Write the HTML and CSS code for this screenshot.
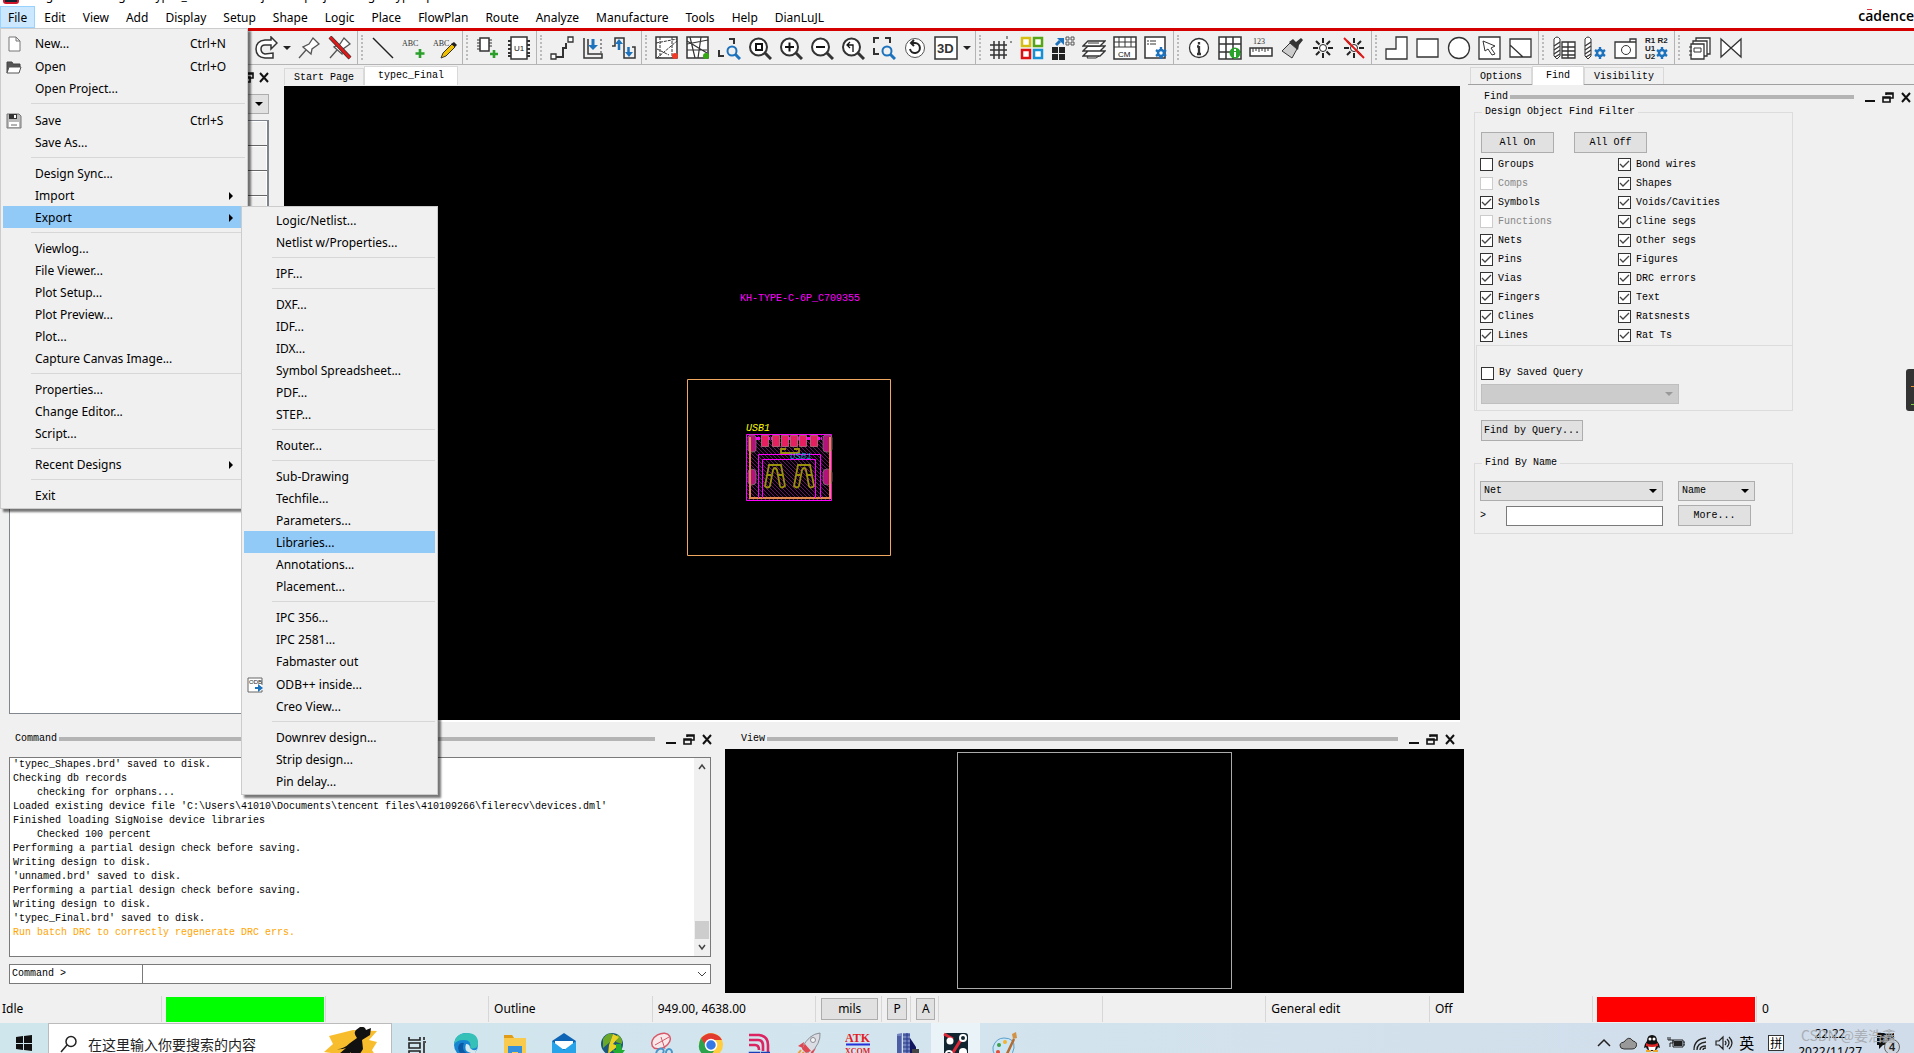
FILE: index.html
```html
<!DOCTYPE html>
<html lang="en">
<head>
<meta charset="utf-8">
<title>Allegro PCB Designer - typec_Final.brd</title>
<link rel="stylesheet" href="styles.css">
</head>
<body>
<svg class="defs" aria-hidden="true">
  <defs>
    <symbol id="min" viewBox="0 0 12 12"><path d="M1 10h10" stroke="#111" stroke-width="2"/></symbol>
    <symbol id="restore" viewBox="0 0 12 12"><path d="M4 4V2h7v5H8M4 3h7M1 6h7v5H1zM1 7h7" fill="none" stroke="#111" stroke-width="1.6"/></symbol>
    <symbol id="close" viewBox="0 0 12 12"><path d="M2 2l8 9M10 2l-8 9" stroke="#111" stroke-width="2"/></symbol>
    <symbol id="pin" viewBox="0 0 24 24"><path d="M2 22l7-8M6 11l8 7 1-5 7-5-6-6-4 6z" fill="#fff" stroke="#555" stroke-width="1.3"/></symbol>
    <symbol id="lens" viewBox="0 0 24 24"><circle cx="10.500" cy="11" r="8.500" fill="#fff" stroke="#333" stroke-width="2"/><path d="M17 17l6 6" stroke="#333" stroke-width="3"/></symbol>
    <symbol id="gear" viewBox="0 0 12 12"><circle cx="6" cy="6" r="3" fill="none" stroke="#1c72bd" stroke-width="2.500"/><path d="M6 0v3M6 9v3M1 3l2 1.500M9 7.500L11 9M1 9l2-1.500M9 4.500L11 3" stroke="#1c72bd" stroke-width="2.400"/></symbol>
    <symbol id="sun" viewBox="0 0 24 24"><circle cx="12" cy="12" r="3.500" fill="#fff" stroke="#222"/><path d="M12 2v5M12 17v5M2 12h5M17 12h5M5 5l3.500 3.500M15.500 15.500L19 19M19 5l-3.500 3.500M8.500 15.500L5 19" stroke="#222" stroke-width="2"/></symbol>
    <symbol id="drill" viewBox="0 0 8 24"><path d="M1 3q3-4 6 0v17l-3 3-3-3z" fill="#fff" stroke="#333"/><path d="M1 10l6-4M1 14l6-4M1 18l6-4M2 21l5-3" stroke="#333" stroke-width="1.300"/></symbol>
  </defs>
</svg>

<div class="app">
  <header class="titlebar">
    <svg width="16" height="16" viewBox="0 0 16 16"><rect width="16" height="16" rx="3" fill="#d0142c"/><rect x="2" width="12" height="14" fill="#0e2430"/></svg>
    <span>Allegro PCB Designer: typec_Final.brd  Project: D:/project/allegro/typec/pcb</span>
  </header>

  <nav class="menubar">
    <button class="open">File</button><button>Edit</button><button>View</button><button>Add</button><button>Display</button><button>Setup</button><button>Shape</button><button>Logic</button><button>Place</button><button>FlowPlan</button><button>Route</button><button>Analyze</button><button>Manufacture</button><button>Tools</button><button>Help</button><button>DianLuJL</button>
    <span class="brand">c<span class="macron">a</span>dence</span>
  </nav>

  <div class="toolbar">
    <div class="tools first">
      <button aria-label="Redo"><svg viewBox="0 0 24 24"><path d="M19 17v5h-8Q2 21 2 13T11 4h6V1l6 6-6 6v-4h-6q-4 0-4 4t4 5z" fill="#fff" stroke="#333" stroke-width="1.500"/></svg></button>
      <button class="caret" aria-label="Redo list"><svg viewBox="0 0 8 8"><path d="M0 2h8L4 6z" fill="#222"/></svg></button>
      <button aria-label="Fix"><svg><use href="#pin"/></svg></button>
      <button aria-label="Unfix"><svg viewBox="0 0 24 24"><use href="#pin" width="24" height="24"/><path d="M2 1l20 21" stroke="#333" stroke-width="4"/><path d="M2 1l20 21" stroke="#e01818" stroke-width="2.600"/></svg></button>
    </div>
    <div class="tools">
      <button aria-label="Add line"><svg viewBox="0 0 24 24"><path d="M2 2l20 20" stroke="#222" stroke-width="1.500"/></svg></button>
      <button aria-label="Add text"><svg viewBox="0 0 24 24"><text x="0" y="10" class="ts">ABC</text><path d="M18 13v9M13.500 17.500h9" stroke="#2aa02a" stroke-width="2.600"/></svg></button>
      <button aria-label="Edit text"><svg viewBox="0 0 24 24"><text x="0" y="10" class="ts">ABC</text><path d="M8 22l2-5 9-9 3 3-9 9z" fill="#f0c000" stroke="#333"/><path d="M18 8l4 3 2-2-3-3z" fill="#222"/></svg></button>
    </div>
    <div class="tools">
      <button aria-label="Place manual"><svg viewBox="0 0 24 24"><rect x="4" y="2" width="9" height="13" fill="#fff" stroke="#333" stroke-width="1.500"/><path d="M1 4h3M1 7h3M1 10h3M1 13h3M13 4h3M13 7h3M13 10h3" stroke="#333"/><path d="M18 14v8M14 18h8" stroke="#2aa02a" stroke-width="2.600"/></svg></button>
      <button aria-label="Component"><svg viewBox="0 0 24 24"><rect x="4" y="1" width="16" height="22" fill="#fff" stroke="#333" stroke-width="1.500"/><path d="M1 5h3M1 9h3M1 13h3M1 17h3M1 20h3M20 5h3M20 9h3M20 13h3M20 17h3M20 20h3" stroke="#333" stroke-width="2"/><text x="7" y="15" class="tm">U1</text></svg></button>
    </div>
    <div class="tools">
      <button aria-label="Add connect"><svg viewBox="0 0 24 24"><path d="M1 18h5v5H1zM18 1h5v5h-5z" fill="#fff" stroke="#333" stroke-width="1.300"/><path d="M6 21h7v-9h3V7" fill="none" stroke="#333" stroke-width="2"/></svg></button>
      <button aria-label="Slide"><svg viewBox="0 0 24 24"><path d="M3 2v20h18v-4H7V3" fill="none" stroke="#333" stroke-width="1.500"/><path d="M20 3v14" stroke="#333" stroke-dasharray="2 2"/><path d="M12 3v8" stroke="#1c72bd" stroke-width="3"/><path d="M7 9h10l-5 5z" fill="#1c72bd"/></svg></button>
      <button aria-label="Delay tune"><svg viewBox="0 0 24 24"><path d="M0 10h3V2h9v20h11V11h-3" fill="none" stroke="#333" stroke-width="1.500"/><path d="M7 14V7M16.500 11v7" stroke="#1c72bd" stroke-width="2.500"/><path d="M3 8h8L7 3zM13 16h8l-4 5z" fill="#1c72bd"/></svg></button>
    </div>
    <div class="tools">
      <button aria-label="Unrats all"><svg viewBox="0 0 24 24"><path d="M1 1h21v21H1z" fill="#fff" stroke="#333" stroke-width="1.500"/><path d="M5 1v21M17 1v21M1 7l21-4M2 22l20-17M2 13l12 6" fill="none" stroke="#333" stroke-dasharray="3 1"/><circle cx="20" cy="20" r="3" fill="#f03b28"/></svg></button>
      <button aria-label="Rats all"><svg viewBox="0 0 24 24"><path d="M1 1h21v21H1z" fill="#fff" stroke="#333" stroke-width="1.500"/><path d="M4 1l5 21M15 1l-3 21M1 8l21-4M1 14h20M1 5l20 12" fill="none" stroke="#333" stroke-width="1.200"/><circle cx="20" cy="20" r="3" fill="#35a910"/></svg></button>
      <button aria-label="Zoom points"><svg viewBox="0 0 24 24"><path d="M12 3h5v5M2 14v6h5" fill="none" stroke="#333" stroke-width="2"/><circle cx="15" cy="15" r="4.500" fill="none" stroke="#1c72bd" stroke-width="2"/><path d="M18 18l5 5" stroke="#1c72bd" stroke-width="3"/></svg></button>
      <button aria-label="Zoom fit"><svg viewBox="0 0 24 24"><use href="#lens" width="24" height="24"/><path d="M8 8h6v6H8z" fill="none" stroke="#111" stroke-width="2"/></svg></button>
      <button aria-label="Zoom in"><svg viewBox="0 0 24 24"><use href="#lens" width="24" height="24"/><path d="M6 11h9M10.500 6.500v9" stroke="#111" stroke-width="2"/></svg></button>
      <button aria-label="Zoom out"><svg viewBox="0 0 24 24"><use href="#lens" width="24" height="24"/><path d="M6 11h9" stroke="#111" stroke-width="2"/></svg></button>
      <button aria-label="Zoom previous"><svg viewBox="0 0 24 24"><use href="#lens" width="24" height="24"/><path d="M12 16V9H7M9 6L6 9l3 3" fill="none" stroke="#111" stroke-width="1.300"/></svg></button>
      <button aria-label="Zoom selection"><svg viewBox="0 0 24 24"><path d="M2 7V2h5M13 2h5v5M2 12v6h5" fill="none" stroke="#333" stroke-width="2"/><circle cx="15" cy="15" r="4.500" fill="none" stroke="#1c72bd" stroke-width="2"/><path d="M18 18l5 5" stroke="#1c72bd" stroke-width="3"/></svg></button>
      <button aria-label="Redraw"><svg viewBox="0 0 24 24"><circle cx="12" cy="12" r="9.500" fill="#fff" stroke="#555"/><path d="M7 13a5 5 0 1 0 5-6H9M11 4L8 7l3 3" fill="none" stroke="#222" stroke-width="2"/></svg></button>
      <button aria-label="3D view"><svg viewBox="0 0 24 24"><path d="M1 1h22v22H1z" fill="#fff" stroke="#333" stroke-width="1.500"/><text x="3" y="17" class="tl">3D</text></svg></button>
      <button class="caret" aria-label="3D list"><svg viewBox="0 0 8 8"><path d="M0 2h8L4 6z" fill="#222"/></svg></button>
    </div>
    <div class="tools">
      <button aria-label="Grid"><svg viewBox="0 0 24 24"><path d="M5 5v18M10 5v18M15 5v18M1 9h17M1 14h17M1 19h17" stroke="#333" stroke-width="1.500"/><path d="M18 0v3M21 6h2" stroke="#333"/></svg></button>
      <button aria-label="Color"><svg viewBox="0 0 24 24" fill="#fff" stroke-width="2.500"><path d="M2 2h8v8H2z" stroke="#d6bf14"/><path d="M14 2h8v8h-8z" stroke="#57a414"/><path d="M2 14h8v8H2z" stroke="#dd1111"/><path d="M14 14h8v8h-8z" stroke="#168fd4"/></svg></button>
      <button aria-label="Visibility"><svg viewBox="0 0 24 24"><path d="M1 11h6v6H1zM8 11h6v6H8zM1 18h6v6H1zM8 18h6v6H8z" fill="#222"/><path d="M5 9l4-4" stroke="#1c72bd" stroke-width="3"/><path d="M6 2h7v7z" fill="#1c72bd"/><path d="M15 1h3v3h-3zM20 1h3v3h-3zM15 6h3v3h-3zM20 6h3v3h-3z" fill="none" stroke="#555"/></svg></button>
      <button aria-label="Cross-section"><svg viewBox="0 0 24 24"><path d="M6 15h17l-5 5H1zM6 10h17l-5 5H1z" fill="#fff" stroke="#333" stroke-width="1.300"/><path d="M6 5h17l-5 5H1z" fill="#fff" stroke="#333" stroke-width="1.300"/><path d="M6 20l-1 2h9l3-2M6 7h11" fill="none" stroke="#333"/></svg></button>
      <button aria-label="Constraint manager"><svg viewBox="0 0 24 24"><path d="M1 1h22v22H1z" fill="#fff" stroke="#333" stroke-width="1.500"/><path d="M1 6h22M1 11h22M6 1v10M12 1v10M18 1v10" stroke="#333"/><text x="5" y="21" class="tm">CM</text></svg></button>
      <button aria-label="Design parameters"><svg viewBox="0 0 24 24"><path d="M1 1h20v21H1z" fill="#fff" stroke="#333" stroke-width="1.500"/><path d="M3 5h2M3 8h2M6 5h6M6 8h6" stroke="#333"/><use href="#gear" x="11" y="11" width="12" height="12"/></svg></button>
    </div>
    <div class="tools">
      <button aria-label="Show element"><svg viewBox="0 0 24 24"><circle cx="12" cy="12" r="9.500" fill="#fff" stroke="#333" stroke-width="1.300"/><path d="M12 6v2.500M12 10v8M10 18h4M10 10.500h2" stroke="#333" stroke-width="2.300"/></svg></button>
      <button aria-label="Grid info"><svg viewBox="0 0 24 24"><path d="M1 1h22v22H1zM8 1v22M15 1v22M1 8h22M1 16h22" fill="#fff" stroke="#333" stroke-width="1.500"/><circle cx="17" cy="17" r="5.500" fill="#29a329"/><path d="M17 13v2M17 16v5" stroke="#fff" stroke-width="2"/></svg></button>
      <button aria-label="Measure"><svg viewBox="0 0 24 24"><text x="4" y="8" class="ts">123</text><path d="M1 12h22v8H1z" fill="#fff" stroke="#333" stroke-width="1.500"/><path d="M4 12v4M7 12v3M10 12v4M13 12v3M16 12v4M19 12v3" stroke="#333"/></svg></button>
      <button aria-label="Highlight"><svg viewBox="0 0 24 24"><path d="M2 15l8-8 7 6-5 9z" fill="#ccc" stroke="#333"/><path d="M9 6l9 8 1-5 4-5-2-2-5 4-3-3z" fill="#333"/></svg></button>
      <button aria-label="Shadow on"><svg><use href="#sun"/></svg></button>
      <button aria-label="Shadow off"><svg viewBox="0 0 24 24"><use href="#sun" width="24" height="24"/><path d="M2 2l20 20" stroke="#e01818" stroke-width="2"/></svg></button>
    </div>
    <div class="tools">
      <button aria-label="Add shape"><svg viewBox="0 0 24 24"><path d="M1 13h10V1h11v22H1z" fill="#fff" stroke="#333" stroke-width="1.300"/></svg></button>
      <button aria-label="Add rectangle"><svg viewBox="0 0 24 24"><path d="M1 3h21v18H1z" fill="#fff" stroke="#333" stroke-width="1.300"/></svg></button>
      <button aria-label="Add circle"><svg viewBox="0 0 24 24"><circle cx="12" cy="12" r="10.500" fill="#fff" stroke="#333" stroke-width="1.300"/></svg></button>
      <button aria-label="Select shape"><svg viewBox="0 0 24 24"><path d="M1 1h21v22H1z" fill="#fff" stroke="#333" stroke-width="1.300"/><path d="M5 5l12 5-4 2 4 6-3 1-4-6-3 2z" fill="#fff" stroke="#333"/></svg></button>
      <button aria-label="Void polygon"><svg viewBox="0 0 24 24"><path d="M1 3h21v18h-8L1 9zM1 9v12h13" fill="#fff" stroke="#333" stroke-width="1.300"/></svg></button>
    </div>
    <div class="tools">
      <button aria-label="Drill legend"><svg viewBox="0 0 24 24"><use href="#drill" x="1" width="8" height="24"/><path d="M10 6h13v16H10zM10 11h13M10 15h13M10 19h13M16 6v16" fill="#fff" stroke="#333" stroke-width="1.300"/></svg></button>
      <button aria-label="NC parameters"><svg viewBox="0 0 24 24"><use href="#drill" x="1" width="8" height="24"/><use href="#gear" x="11" y="11" width="12" height="12"/></svg></button>
      <button aria-label="Artwork"><svg viewBox="0 0 24 24"><path d="M1 6h15V3h6v19H1zM16 6h6" fill="#fff" stroke="#333" stroke-width="1.300"/><circle cx="12" cy="14" r="4.500" fill="none" stroke="#333"/></svg></button>
      <button aria-label="Auto rename"><svg viewBox="0 0 24 24"><text x="0" y="7" class="tx">R1 R2</text><text x="0" y="15" class="tx">U1</text><text x="0" y="23" class="tx">U2</text><use href="#gear" x="11" y="11" width="12" height="12"/></svg></button>
    </div>
    <div class="tools last">
      <button aria-label="Reports"><svg viewBox="0 0 24 24"><path d="M8 5V2h14v16h-3M5 8V5h14v15h-3M3 8h13v15H3z" fill="#fff" stroke="#333" stroke-width="1.300"/><path d="M6 12h7v4H6zM1 11h3M1 15h3M1 19h3" fill="none" stroke="#333"/></svg></button>
      <button aria-label="Waive DRC"><svg viewBox="0 0 24 24"><path d="M2 3l20 18V3L2 21z" fill="#fff" stroke="#333" stroke-width="1.300"/></svg></button>
    </div>
  </div>

  <main class="workspace">
    <div class="center">
      <div class="upper">
        <aside class="dock">
          <div class="dock-head"><svg><use href="#restore"/></svg><svg><use href="#close"/></svg></div>
          <select class="combo" aria-label="View"><option></option></select>
          <div class="cells"><i></i><i></i><i></i><i></i></div>
          <div class="listbox"></div>
        </aside>
        <section class="editor">
          <div class="tabs"><button>Start Page</button><button class="on">typec_Final</button></div>
          <div class="canvas">
            <svg class="board" viewBox="0 0 300 300" width="300" height="300">
              <defs>
                <pattern id="hatch" width="4" height="4" patternUnits="userSpaceOnUse"><path d="M0 0l4 4" stroke="#8a108a" stroke-width=".8"/></pattern>
              </defs>
              <text x="80" y="31" class="silk">KH-TYPE-C-6P_C709355</text>
              <path d="M27.500 109.500h203v176h-203z" fill="none" stroke="#f0a860"/>
              <text x="86" y="161" class="ref">USB1</text>
              <path d="M86.500 164.500h85v66h-85z" fill="url(#hatch)" stroke="#f0f"/>
              <path d="M96 168.500h66" stroke="#f0f" stroke-width="3" stroke-dasharray="4 1"/>
              <g fill="#b3127a" stroke="#777" stroke-width=".8"><rect x="88" y="165" width="8" height="17" rx="3"/><rect x="163" y="165" width="9" height="17" rx="3"/><rect x="88" y="199" width="8" height="16" rx="4"/><rect x="163" y="199" width="9" height="16" rx="4"/></g>
              <path d="M90 167v61h80v-61" fill="none" stroke="#e08a50" stroke-width="2"/>
              <g fill="#e62060" stroke="#a86070"><path d="M101.500 165.500h7v11h-7zM112.500 165.500h7v11h-7zM121.500 165.500h7v11h-7zM130.500 165.500h7v11h-7zM139.500 165.500h7v11h-7zM150.500 165.500h7v11h-7z"/></g>
              <path d="M98.500 228v-43.500h62V228M102.500 228v-38.500h53V228" fill="none" stroke="#f0f"/>
              <g fill="none" stroke="#99900c" stroke-width="1.800"><path d="M126 179h-5v4h18v-4h-5"/><path d="M109 195h12l4 21q-4 3-5 0l-3-16q-2-4-4 0l-3 16q-2 3-5 0zM107 205h4M118 205h5"/><path d="M138 195h12l4 21q-4 3-5 0l-3-16q-2-4-4 0l-3 16q-2 3-5 0zM136 205h4M147 205h5"/></g>
              <text x="130" y="189" class="asm">USB1</text>
            </svg>
          </div>
        </section>
      </div>
      <div class="lower">
        <section class="command">
          <div class="pane-head"><span>Command</span><b></b><svg><use href="#min"/></svg><svg><use href="#restore"/></svg><svg><use href="#close"/></svg></div>
          <div class="log">
<pre>'typec_Shapes.brd' saved to disk.
Checking db records
    checking for orphans...
Loaded existing device file 'C:\Users\41010\Documents\tencent files\410109266\filerecv\devices.dml'
Finished loading SigNoise device libraries
    Checked 100 percent
Performing a partial design check before saving.
Writing design to disk.
'unnamed.brd' saved to disk.
Performing a partial design check before saving.
Writing design to disk.
'typec_Final.brd' saved to disk.
<em>Run batch DRC to correctly regenerate DRC errs.</em></pre>
            <div class="scroll">
              <svg viewBox="0 0 10 10"><path d="M2 7l3-4 3 4" fill="none" stroke="#444" stroke-width="1.500"/></svg>
              <i></i>
              <svg viewBox="0 0 10 10"><path d="M2 3l3 4 3-4" fill="none" stroke="#444" stroke-width="1.500"/></svg>
            </div>
          </div>
          <div class="prompt"><label for="cmd">Command &gt;</label><input id="cmd" type="text"><svg viewBox="0 0 10 10"><path d="M1 3l4 4 4-4" fill="none" stroke="#444"/></svg></div>
        </section>
        <section class="view">
          <div class="pane-head"><span>View</span><b></b><svg><use href="#min"/></svg><svg><use href="#restore"/></svg><svg><use href="#close"/></svg></div>
          <div class="world"><div class="extent"></div></div>
        </section>
      </div>
    </div>

    <aside class="find">
      <div class="tabs"><button>Options</button><button class="on">Find</button><button>Visibility</button></div>
      <div class="pane-head"><span>Find</span><b></b><svg><use href="#min"/></svg><svg><use href="#restore"/></svg><svg><use href="#close"/></svg></div>
      <fieldset class="filter">
        <legend>Design Object Find Filter</legend>
        <div class="pair"><button class="btn">All On</button><button class="btn">All Off</button></div>
        <div class="checks">
          <label><input type="checkbox">Groups</label><label><input type="checkbox" checked>Bond wires</label>
          <label class="off"><input type="checkbox" disabled>Comps</label><label><input type="checkbox" checked>Shapes</label>
          <label><input type="checkbox" checked>Symbols</label><label><input type="checkbox" checked>Voids/Cavities</label>
          <label class="off"><input type="checkbox" disabled>Functions</label><label><input type="checkbox" checked>Cline segs</label>
          <label><input type="checkbox" checked>Nets</label><label><input type="checkbox" checked>Other segs</label>
          <label><input type="checkbox" checked>Pins</label><label><input type="checkbox" checked>Figures</label>
          <label><input type="checkbox" checked>Vias</label><label><input type="checkbox" checked>DRC errors</label>
          <label><input type="checkbox" checked>Fingers</label><label><input type="checkbox" checked>Text</label>
          <label><input type="checkbox" checked>Clines</label><label><input type="checkbox" checked>Ratsnests</label>
          <label><input type="checkbox" checked>Lines</label><label><input type="checkbox" checked>Rat Ts</label>
        </div>
        <div class="saved">
          <label><input type="checkbox">By Saved Query</label>
          <select class="combo" disabled aria-label="Saved query"><option></option></select>
        </div>
      </fieldset>
      <button class="btn query">Find by Query...</button>
      <fieldset class="byname">
        <legend>Find By Name</legend>
        <select class="combo" aria-label="Object type"><option>Net</option></select>
        <select class="combo short" aria-label="Match by"><option>Name</option></select>
        <div class="entry"><label for="nm">&gt;</label><input id="nm" type="text"></div>
        <button class="btn">More...</button>
      </fieldset>
      <div class="meter"><i></i><i></i></div>
    </aside>
  </main>

  <footer class="status">
    <span>Idle</span><span class="green"><i></i></span><span></span><span>Outline</span><span>949.00, 4638.00</span>
    <span class="btns"><button class="btn">mils</button></span><span class="btns"><button class="btn">P</button></span><span class="btns"><button class="btn">A</button></span>
    <span></span><span></span><span>General edit</span><span>Off</span><span class="red"><i></i></span><span>0</span>
  </footer>

  <div class="taskbar">
    <button class="start" aria-label="Start"><svg width="16" height="16" viewBox="0 0 16 16"><path d="M0 2l7-1v7H0zM8 1l8-1v8H8zM0 9h7v6l-7-1zM8 9h8v7l-8-1z" fill="#111"/></svg></button>
    <label class="search"><svg width="18" height="18" viewBox="0 0 18 18"><circle cx="11" cy="6.500" r="5" fill="none" stroke="#222" stroke-width="1.500"/><path d="M7 10l-6 7" stroke="#222" stroke-width="1.500"/></svg><input type="text" placeholder="在这里输入你要搜索的内容" aria-label="搜索"><svg class="dancer" width="56" height="34" viewBox="0 0 56 34"><path d="M6 9l24-6 24 1-8 9 8 2-5 8 6 10H0l8-7-7-1 9-8z" fill="#f8bd2c"/><path d="M12 22q8 1 15-6l7-5q-4-5-1-8l4-3q5-1 6 3l5-2-1 7-8 5 1 9-7 11h-8l3-8-10 8H9l14-12q-5 2-11 1z" fill="#111"/></svg></label>
    <button aria-label="Task view"><svg viewBox="0 0 26 26"><path d="M5 5v3h11V5M5 22v-3h11v3M5 11h11v5H5zM20 5v3M20 11v11M19 10h3" fill="none" stroke="#222" stroke-width="1.600"/></svg></button>
    <button aria-label="Edge"><svg viewBox="0 0 26 26"><circle cx="13" cy="13" r="12" fill="#1686d2"/><path d="M1 13Q2 1 14 1t11 12q-2 5-8 3 2-8-6-8Q3 8 1 13z" fill="#35c0b8"/><path d="M11 11q-4 9 8 12-12 4-14-7 1-6 6-5z" fill="#0c5aa5"/><path d="M13 12q4 0 4 4 4 4 7 1l-2 4q-12 1-9-9z" fill="#d4e8ee"/></svg></button>
    <button aria-label="File Explorer"><svg viewBox="0 0 26 26"><path d="M2 3h8l2 3h12v18H2z" fill="#f8ca4d"/><path d="M2 3h8l2 3H2z" fill="#e09c16"/><path d="M6 14h14v12h-4v-6h-6v6H6z" fill="#348fdc"/></svg></button>
    <button aria-label="Mail"><svg viewBox="0 0 26 26"><path d="M1 9l12-8 12 8v17H1z" fill="#0f65b5"/><path d="M4 9h18v8H4z" fill="#fff"/><path d="M1 9l12 9 12-9v17H1z" fill="#27a3ea"/></svg></button>
    <button aria-label="IDM"><svg viewBox="0 0 26 26"><circle cx="12" cy="12" r="11" fill="#1b567d"/><path d="M3 7q5-7 10-5l-3 8-7 6zM17 2q6 4 5 10l-6-2z" fill="#6ba828"/><path d="M13 2l6 3-6 7 5 2-10 8 1-9z" fill="#ead224"/><path d="M16 12h5l1 6h3l-6 8-7-8h4z" fill="#22ac31"/></svg></button>
    <button aria-label="Snip"><svg viewBox="0 0 26 26"><ellipse cx="12" cy="9" rx="10" ry="7" transform="rotate(-30 12 9)" fill="#f7e8ea" stroke="#d75869" stroke-width="1.500"/><path d="M6 13l14-8M12 5l4 12" stroke="#d75869"/><ellipse cx="11" cy="20" rx="4" ry="3" transform="rotate(-40 11 20)" fill="none" stroke="#4795ca" stroke-width="2"/><ellipse cx="20" cy="21" rx="3" ry="4" fill="none" stroke="#4795ca" stroke-width="2"/></svg></button>
    <button aria-label="Chrome"><svg viewBox="0 0 26 26"><circle cx="13" cy="13" r="12" fill="#ffcd40"/><path d="M3 6Q12-3 22 5l2 3H13l-5 9z" fill="#e23b30"/><path d="M3 6l6 10 7 3-5 6Q-4 21 3 6z" fill="#2ba24c"/><circle cx="13" cy="13" r="5.500" fill="#3478e5" stroke="#fff" stroke-width="1.500"/></svg></button>
    <button aria-label="PADS"><svg viewBox="0 0 26 26"><path d="M2 3h10q9 1 9 10v7M2 8h9q5 0 5 6v5M2 13h6q4 0 4 5" fill="none" stroke="#dc2462" stroke-width="2.600"/><path d="M3 26v-5h9v5M15 26v-5h8" fill="none" stroke="#1740b8" stroke-width="2.500"/></svg></button>
    <button aria-label="Launcher"><svg viewBox="0 0 26 26"><path d="M6 16Q13 2 24 1q1 10-10 21z" fill="#dadde3" stroke="#8b8d94"/><path d="M8 10l-6 4 5 2zM15 20v5l5-9z" fill="#df4751"/><path d="M9 12l6 7-5 2-4-4z" fill="#df4751"/><circle cx="17" cy="8" r="2.500" fill="#f3f4f6" stroke="#8b8d94"/><path d="M8 20l-6 6M5 18l-3 4" stroke="#ec9b3b" stroke-width="2"/></svg></button>
    <button aria-label="ATK XCOM"><svg viewBox="0 0 26 26"><text x="0" y="10" class="atk">ATK</text><path d="M1 12.500h24" stroke="#2332d8" stroke-width="2"/><text x="0" y="22" class="atk small">XCOM</text></svg></button>
    <button aria-label="Building"><svg viewBox="0 0 26 26"><path d="M3 2l5-1v25H3zM9 1h7v25H9z" fill="#7384c0"/><path d="M9 3h7M9 7h7M9 11h7M9 15h7M9 19h7M4 4v20M6 4v20M13 1v25" stroke="#263887"/><path d="M16 6l6 9v11h-6z" fill="#11155f"/><path d="M18 17h7v9h-7z" fill="#444"/></svg></button>
    <button class="active" aria-label="Allegro"><svg viewBox="0 0 26 26"><rect x="1" y="1" width="24" height="28" rx="3" fill="#112531"/><path d="M9 22L19 6M1 2l9 5" stroke="#dc2937" stroke-width="3"/><g fill="#112531" stroke="#fff" stroke-width="2"><circle cx="20" cy="6" r="3"/><circle cx="6" cy="22" r="3"/></g><circle cx="7" cy="9" r="3.500" fill="#fff"/><circle cx="20" cy="20" r="4" fill="#fff"/></svg></button>
    <button aria-label="Paint"><svg viewBox="0 0 26 26"><path d="M12 6Q23 6 22 16q-2 11-13 10Q0 24 1 15q3-9 11-9z" fill="#cae5f3" stroke="#5ba0cc"/><circle cx="7" cy="13" r="2" fill="#3f9f48"/><circle cx="13" cy="10" r="2" fill="#f2b52d"/><circle cx="6" cy="20" r="2" fill="#e24b36"/><path d="M14 24L22 7" stroke="#b56a2f" stroke-width="2.500"/><path d="M21 7l-1-5 4-2 1 6z" fill="#d19245"/></svg></button>
    <div class="tray">
      <svg viewBox="0 0 18 18"><path d="M3 12l6-6 6 6" fill="none" stroke="#222" stroke-width="1.500"/></svg>
      <svg viewBox="0 0 18 18"><path d="M2 14q-3-5 3-6 5-7 9-1 5 1 3 6-1 2-4 2H5z" fill="#999" stroke="#333"/></svg>
      <svg viewBox="0 0 18 18"><path d="M3 13Q0 16 2 10l2-3Q4 1 9 1t5 6l2 3q2 6-1 3-1 4-6 4t-6-4z" fill="#111"/><path d="M5 12h8l-1 4H6z" fill="#fff"/><circle cx="7" cy="5" r="1.500" fill="#fff"/><circle cx="11" cy="5" r="1.500" fill="#fff"/><path d="M3 9q6 3 12 0v3q-6 2-12 0z" fill="#dc2525"/><path d="M3 17h5M10 17h5" stroke="#f0a626" stroke-width="2"/></svg>
      <svg viewBox="0 0 18 18"><path d="M6 6h10v7H6zM3 3v3M1 3v3h5v3H3v4M16 8h2v3h-2" fill="none" stroke="#222"/><path d="M7 7h8v5H7z" fill="#222"/></svg>
      <svg viewBox="0 0 18 18"><path d="M3 16Q3 5 15 4M6 16q0-7 9-8M9 16q0-4 6-4M12 16q0-2 3-2" fill="none" stroke="#222" stroke-width="1.300"/></svg>
      <svg viewBox="0 0 18 18"><path d="M1 7h3l4-4v12l-4-4H1zM10 7q2 2 0 4M12 5q4 4 0 8M14 3q6 6 0 12" fill="none" stroke="#222" stroke-width="1.200"/></svg>
      <span class="ime">英</span><span class="ime box">拼</span>
      <span class="clock">22:22<br>2022/11/27</span>
      <svg class="note" viewBox="0 0 24 24"><path d="M1 2h17v12H7l-4 4v-4H1z" fill="#111"/><path d="M4 6h11M4 10h11" stroke="#ddd"/><circle cx="16" cy="16" r="7.500" fill="#ccd4de" stroke="#666"/><text x="13" y="20" class="badge">4</text></svg>
    </div>
    <span class="mark">CSDN @姜浩鑫</span>
  </div>

  <ul class="menu">
    <li class="ico"><svg viewBox="0 0 16 16"><path d="M3 1h7l4 4v10H3zM10 1v4h4" fill="#fff" stroke="#777"/></svg>New...<kbd>Ctrl+N</kbd></li>
    <li class="ico"><svg viewBox="0 0 16 16"><path d="M1 14V3h5l1 2h7v3" fill="#555" stroke="#444"/><path d="M3 8h12l-2 6H1z" fill="#fff" stroke="#555"/></svg>Open<kbd>Ctrl+O</kbd></li>
    <li>Open Project...</li>
    <li class="sep"></li>
    <li class="ico"><svg viewBox="0 0 16 16"><path d="M1 1h12l2 2v12H1z" fill="#bbb" stroke="#777"/><path d="M3 1h8v5H3z" fill="#333"/><path d="M8 2h2v3H8z" fill="#fff"/><path d="M3 9h10v5H3z" fill="#fff"/><path d="M5 12h6" stroke="#666"/></svg>Save<kbd>Ctrl+S</kbd></li>
    <li>Save As...</li>
    <li class="sep"></li>
    <li>Design Sync...</li>
    <li class="sub">Import</li>
    <li class="sub hot">Export
      <ul class="menu child">
        <li>Logic/Netlist...</li><li>Netlist w/Properties...</li><li class="sep"></li>
        <li>IPF...</li><li class="sep"></li>
        <li>DXF...</li><li>IDF...</li><li>IDX...</li><li>Symbol Spreadsheet...</li><li>PDF...</li><li>STEP...</li><li class="sep"></li>
        <li>Router...</li><li class="sep"></li>
        <li>Sub-Drawing</li><li>Techfile...</li><li>Parameters...</li><li class="hot">Libraries...</li><li>Annotations...</li><li>Placement...</li><li class="sep"></li>
        <li>IPC 356...</li><li>IPC 2581...</li><li>Fabmaster out</li>
        <li class="ico"><svg viewBox="0 0 16 16"><path d="M15 8V1H1v14h14v-2" fill="#fff" stroke="#666"/><text x="2" y="7" class="odb">ODB</text><path d="M8 11h4" stroke="#1c72bd" stroke-width="2"/><path d="M11 7l5 4-5 4z" fill="#1c72bd"/></svg>ODB++ inside...</li>
        <li>Creo View...</li><li class="sep"></li>
        <li>Downrev design...</li><li>Strip design...</li><li>Pin delay...</li>
      </ul>
    </li>
    <li class="sep"></li>
    <li>Viewlog...</li><li>File Viewer...</li><li>Plot Setup...</li><li>Plot Preview...</li><li>Plot...</li><li>Capture Canvas Image...</li>
    <li class="sep"></li>
    <li>Properties...</li><li>Change Editor...</li><li>Script...</li>
    <li class="sep"></li>
    <li class="sub">Recent Designs</li>
    <li class="sep"></li>
    <li>Exit</li>
  </ul>
</div>
</body>
</html>
```

FILE: styles.css
```css
:root {
  --ui: "Noto Sans", "Noto Sans CJK SC", sans-serif;
  --mono: "Liberation Mono", "Noto Sans CJK SC", monospace;
  --face: #f0f0f0;
  --hot: #91c9f7;
}
* { box-sizing: border-box; }
body { margin: 0; background: var(--face); color: #000; font: 12px/16px var(--ui); }
button, input, select { font: inherit; color: inherit; border-radius: 0; margin: 0; }
button { padding: 0; border: 0; background: none; }
svg { display: block; flex: none; }
.defs { position: absolute; width: 0; height: 0; }
.app { position: relative; display: flex; flex-direction: column; height: 100vh; overflow: hidden; }

/* title and menu bar */
.titlebar { display: flex; align-items: flex-end; gap: 6px; height: 6px; padding: 0 3px 2px; overflow: hidden; background: #fff; line-height: 16px; flex: none; }
.titlebar span { white-space: pre; }
.menubar { display: flex; gap: 1px; height: 25px; flex: none; background: #fff; border-bottom: 3px solid #d40000; }
.menubar button { padding: 1px 8px 0; }
.menubar .open { background: #cce8ff; box-shadow: inset 0 0 0 1px #99d1ff; }
.brand { margin-left: auto; font: 600 14px/19px "Open Sans", sans-serif; }
.macron { position: relative; }
.macron::before { content: ""; position: absolute; left: 2px; top: 3px; width: 5px; height: 1px; background: #e03040; }

/* toolbar */
.toolbar { display: flex; height: 34px; flex: none; border-bottom: 1px solid #b4b4b4; }
.tools { position: relative; display: flex; align-items: center; padding: 0 2px 0 9px; border-right: 1px solid #b4b4b4; flex: none; }
.tools::before { content: ""; position: absolute; left: 3px; top: 4px; bottom: 4px; border-left: 2px dotted #bbb; }
.tools.first { width: 358px; justify-content: flex-end; }
.tools.last { border: 0; }
.tools button { width: 31px; display: flex; justify-content: center; }
.tools svg { width: 24px; height: 24px; }
.tools .caret { width: 12px; }
.tools .caret svg { width: 8px; height: 8px; }
.ts { font: 8px "Liberation Serif", serif; fill: #333; }
.tm { font: 8px "Liberation Sans", sans-serif; fill: #111; }
.tl { font: bold 13px "Liberation Sans", sans-serif; fill: #333; }
.tx { font: bold 8px "Liberation Sans", sans-serif; fill: #222; }
.odb { font: 6px "Liberation Sans", sans-serif; fill: #222; }

/* workspace */
.workspace { display: flex; flex: 1; min-height: 0; }
.center { display: flex; flex-direction: column; flex: 1; min-width: 0; }
.upper { display: flex; flex: 1; min-height: 0; }
.dock { width: 284px; flex: none; display: flex; flex-direction: column; padding: 6px 15px 8px 9px; }
.dock-head { display: flex; justify-content: flex-end; gap: 4px; height: 23px; margin-right: -1px; }
.dock-head svg { width: 12px; height: 12px; }
.cells { margin-top: 6px; border: 2px solid #80848c; border-width: 1px 2px 0 1px; }
.cells i { display: block; height: 25px; background: var(--face); border-bottom: 1px solid #666; box-shadow: inset -1px 1px #fff; }
.listbox { flex: 1; margin-top: 10px; background: #fff; border: 1px solid #82868e; }
.editor { flex: 1; min-width: 0; display: flex; flex-direction: column; padding-right: 4px; }
.tabs { display: flex; align-items: flex-end; height: 20px; font: 10px/14px var(--mono); }
.tabs button { height: 17px; padding: 2px 9px 0; border: 1px solid #d9d9d9; border-bottom: 0; }
.tabs .on { height: 19px; padding: 0 13px; background: #fff; }
.canvas { position: relative; flex: 1; margin-top: 1px; background: #000; border-bottom: 2px solid #fff; }
.board { position: absolute; left: 32%; top: 29%; }
.silk { font: 10px var(--mono); fill: #f0f; }
.ref { font: italic 10px var(--mono); fill: #ff0; }
.asm { font: italic 9px var(--mono); fill: #1693d0; }

/* docked panes */
.pane-head { display: flex; align-items: center; height: 24px; font: 10px/12px var(--mono); }
.pane-head span { padding-top: 3px; }
.pane-head b { flex: 1; height: 4px; margin: 3px 4px 0 2px; background: #b4b4b4; }
.pane-head svg { width: 12px; height: 12px; margin: 3px 0 0 6px; }
.lower { display: flex; height: 271px; flex: none; }
.command { width: 725px; flex: none; padding: 3px 14px 9px 9px; display: flex; flex-direction: column; }
.command .pane-head { padding: 0 0 0 6px; margin: 0 -2px 8px 0; }
.log { display: flex; flex: 1; min-height: 0; background: #fff; border: 1px solid #7a7a7a; }
.log pre { flex: 1; margin: 0; padding-left: 3px; overflow: hidden; font: 10px/14px var(--mono); }
.log em { font-style: normal; color: #ffa500; }
.scroll { width: 16px; display: flex; flex-direction: column; align-items: center; padding: 4px 1px; background: #f0f0f0; }
.scroll svg { width: 10px; height: 10px; }
.scroll i { width: 14px; height: 18px; margin-top: auto; margin-bottom: 3px; background: #cdcdcd; }
.prompt { display: flex; align-items: center; height: 20px; margin-top: 7px; background: #fff; border: 1px solid #7a7a7a; font: 10px/18px var(--mono); }
.prompt label { width: 133px; padding-left: 2px; border-right: 1px solid #7a7a7a; }
.prompt input { flex: 1; border: 0; height: 18px; }
.prompt svg { width: 10px; height: 10px; margin-right: 3px; }
.view { flex: 1; min-width: 0; display: flex; flex-direction: column; padding-top: 3px; }
.view .pane-head { padding: 0 8px 0 16px; }
.world { flex: 1; background: #000; padding: 3px 0 4px; }
.extent { width: 275px; height: 100%; margin-left: 232px; border: 1px solid #aaa; }

/* find panel */
.find { position: relative; width: 450px; flex: none; padding-left: 4px; font: 10px/14px var(--mono); }
.find > .tabs { padding-left: 2px; border-bottom: 1px solid #a0a0a0; }
.find > .tabs .on { margin-bottom: -1px; }
.find > .pane-head { height: 20px; padding: 0 2px 0 16px; }
.find fieldset { margin: 0 0 0 6px; padding: 0 0 0 5px; width: 319px; border: 1px solid #dcdcdc; }
.find legend { margin-left: 2px; padding: 0 3px; line-height: 14px; }
.btn { height: 21px; min-width: 73px; padding: 0 2px; background: #e1e1e1; border: 1px solid #adadad; }
.pair { display: flex; gap: 20px; padding: 13px 0 2px 1px; }
.checks { display: grid; grid-template-columns: 138px 1fr; }
.checks label, .saved label { display: flex; align-items: center; gap: 5px; height: 19px; }
.off { color: #868686; }
input[type="checkbox"] { appearance: none; width: 13px; height: 13px; border: 1px solid #333; background: #fff; }
input[type="checkbox"]:disabled { border-color: #ccc; }
input[type="checkbox"]:checked { background: #fff url("data:image/svg+xml,%3Csvg xmlns='http://www.w3.org/2000/svg' viewBox='0 0 11 11'%3E%3Cpath d='M1 5l3 3 6-6' fill='none' stroke='%23444' stroke-width='1.300'/%3E%3C/svg%3E"); }
.saved { margin-left: -4px; padding: 16px 0 6px 4px; border: 1px solid #dcdcdc; border-width: 1px 0 0 1px; }
.saved label { height: 22px; }
.combo { appearance: none; display: block; width: 100%; height: 20px; padding: 0 3px; border: 1px solid #adadad; background: #e1e1e1 url("data:image/svg+xml,%3Csvg xmlns='http://www.w3.org/2000/svg' width='8' height='4'%3E%3Cpath d='M0 0h8L4 4z'/%3E%3C/svg%3E") no-repeat right 5px center; }
.combo:disabled { width: 198px; opacity: 1; border-color: #bfbfbf; background-color: #ccc; background-image: url("data:image/svg+xml,%3Csvg xmlns='http://www.w3.org/2000/svg' width='8' height='4'%3E%3Cpath d='M0 0h8L4 4z' fill='%23999'/%3E%3C/svg%3E"); }
.query { display: block; margin: 9px 0 15px 13px; }
.find .byname { display: grid; grid-template-columns: 183px 1fr; gap: 4px 15px; padding: 11px 0 7px 5px; justify-items: start; align-items: center; }
.short { width: 77px; }
.entry { display: flex; align-items: center; width: 183px; }
.entry label { width: 26px; }
.entry input { flex: 1; min-width: 0; height: 20px; border: 1px solid #7a7a7a; background: #fff; }
.meter { position: absolute; right: 0; top: 304px; width: 8px; height: 42px; padding: 17px 0 0 5px; background: #333; border-radius: 3px 0 0 3px; }
.meter i { display: block; height: 1px; margin-bottom: 17px; background: #f09030; }
.meter i + i { background: #7fd040; }

/* status bar */
.status { display: grid; grid-template-columns: 162px repeat(4, 1fr) 66px 29px 28px repeat(5, 1fr) 157px; height: 30px; flex: none; padding: 3px 0 1px; }
.status > span { display: flex; align-items: center; padding: 0 2px 0 5px; border-right: 1px solid #d7d7d7; white-space: nowrap; }
.status > span:first-child { padding-left: 2px; }
.status > span:last-child { border: 0; }
.status > .btns { padding: 0 3px 0 5px; }
.status .btn { width: 100%; min-width: 0; height: 22px; line-height: 18px; }
.status i { width: 100%; height: 25px; background: #0f0; }
.status .green, .status .red { padding: 0 1px 0 4px; }
.status .red i { background: #f00; }

/* taskbar: taller than the strip that shows */
.taskbar { position: relative; display: flex; height: 30px; flex: none; overflow: hidden; background: linear-gradient(90deg, #cfe6ed, #d3e4ee 50%, #d1dcea); }
.taskbar > * { height: 40px; }
.taskbar button { width: 49px; display: flex; justify-content: center; padding-top: 9px; flex: none; }
.taskbar button svg { width: 26px; height: 26px; }
.taskbar .start { width: 48px; padding-top: 12px; }
.taskbar .start svg { width: 16px; height: 16px; }
.taskbar .active { background: #eaf3f7; }
.search { display: flex; align-items: center; width: 344px; flex: none; padding: 2px 12px 0 11px; gap: 10px; background: #fff; border: 1px solid #bbb; }
.search input { flex: 1; min-width: 0; border: 0; padding: 0; font: 14px/20px "Noto Sans CJK SC", sans-serif; }
.search input::placeholder { color: #222; opacity: 1; }
.atk { font: bold 12px "Liberation Serif", serif; fill: #e21c24; }
.atk.small { font-size: 8px; }
.tray { margin-left: auto; display: flex; align-items: center; gap: 6px; padding-right: 14px; }
.tray svg { width: 18px; height: 18px; }
.tray .note { width: 24px; height: 24px; margin-left: 8px; }
.ime { font: 15px/18px "Noto Sans CJK SC", sans-serif; }
.box { margin: 0 8px; font-size: 12px; line-height: 14px; border: 1px solid #333; background: #fff; padding: 0 1px; }
.clock { text-align: center; line-height: 18px; }
.badge { font: bold 11px "Liberation Sans", sans-serif; fill: #222; }
.mark { position: absolute; right: 18px; top: 2px; font: 14px/20px "Noto Sans CJK SC", sans-serif; color: #a9aeb4; height: 20px; }

/* drop-down menus */
.menu { position: absolute; left: 0; top: 28px; width: 248px; margin: 0; padding: 2px; list-style: none; background: var(--face); border: 1px solid #ccc; box-shadow: 3px 3px 2px #0008; white-space: nowrap; }
.menu li { display: flex; align-items: center; height: 22px; padding: 2px 0 0 32px; }
.menu .ico { height: 23px; padding-left: 3px; }
.menu .ico svg { width: 16px; height: 16px; margin-right: 13px; }
.menu .sep { height: 9px; margin-left: 28px; padding: 0; }
.menu .sep::before { content: ""; flex: 1; height: 1px; background: #d7d7d7; }
.menu kbd { margin-left: auto; width: 55px; font: inherit; }
.menu .hot { background: var(--hot); }
.menu .sub::after { content: ""; margin-left: auto; margin-right: 12px; border: 4px solid transparent; border-left-color: #000; border-right: 0; }
.menu.child { left: 240px; top: 177px; width: 197px; }
```
